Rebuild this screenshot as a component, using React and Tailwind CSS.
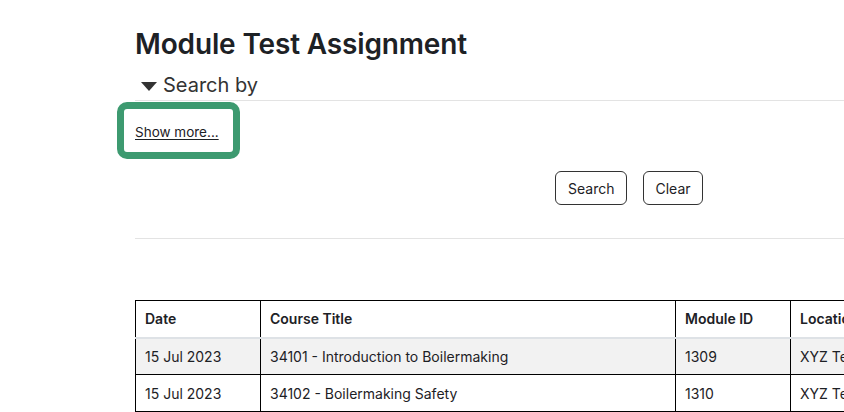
export default function App() {
  return (
    <div
      className="w-[844px] h-[412px] overflow-hidden bg-white text-[#1d2125]"
      style={{ fontFamily: 'Inter, "Noto Sans", sans-serif' }}
    >
      <div className="pl-[135px] pt-[27px] w-[1100px]">
        <h1 className="text-[28px] leading-[34px] font-semibold tracking-[-0.15px] text-[#1d2125]">
          Module Test Assignment
        </h1>
        <div className="flex items-center h-[30px] mt-[9px] pl-[6px] text-[20px] text-[#333]">
          <svg width="16" height="10" viewBox="0 0 16 10" className="mr-[6px] mt-[3px]">
            <polygon points="0,0 16,0 8,9" fill="#333" />
          </svg>
          <span>Search by</span>
        </div>
        <div className="border-t border-[#e3e3e3] w-[709px]" />
        <div className="relative mt-[1px] h-[57px]">
          <div className="absolute left-[-18px] top-[0px] w-[123px] h-[57px] border-[7px] border-[#3d9a70] rounded-[10px]" />
          <div className="pt-[20px] text-[13.5px] leading-[20px] underline underline-offset-2 text-[#1d2125]">
            Show more...
          </div>
        </div>
        <div className="flex gap-[16px] ml-[420px] mt-[12px]">
          <button className="h-[34px] px-[12px] border border-[#333] rounded-[6px] text-[14px] text-[#1d2125] bg-white">
            Search
          </button>
          <button className="h-[34px] px-[11px] border border-[#333] rounded-[6px] text-[14px] text-[#1d2125] bg-white">
            Clear
          </button>
        </div>
        <div className="border-t border-[#e3e3e3] w-[709px] mt-[33px]" />
        <table className="mt-[61px] border-collapse text-[14px] text-[#1d2125]">
          <thead>
            <tr className="h-[37px]">
              <th className="w-[125px] border border-black border-b-2 border-b-[#dee2e6] text-left font-semibold px-[9px]">Date</th>
              <th className="w-[415px] border border-black border-b-2 border-b-[#dee2e6] text-left font-semibold px-[9px]">Course Title</th>
              <th className="w-[115px] border border-black border-b-2 border-b-[#dee2e6] text-left font-semibold px-[9px]">Module ID</th>
              <th className="w-[200px] border border-black border-b-2 border-b-[#dee2e6] text-left font-semibold px-[9px]">Location</th>
            </tr>
          </thead>
          <tbody>
            <tr className="h-[37px] bg-[#f2f2f2]">
              <td className="border border-black px-[9px]">15 Jul 2023</td>
              <td className="border border-black px-[9px]">34101 - Introduction to Boilermaking</td>
              <td className="border border-black px-[9px]">1309</td>
              <td className="border border-black px-[9px]">XYZ Testing Centre</td>
            </tr>
            <tr className="h-[37px] bg-white">
              <td className="border border-black px-[9px]">15 Jul 2023</td>
              <td className="border border-black px-[9px]">34102 - Boilermaking Safety</td>
              <td className="border border-black px-[9px]">1310</td>
              <td className="border border-black px-[9px]">XYZ Testing Centre</td>
            </tr>
          </tbody>
        </table>
      </div>
    </div>
  );
}
